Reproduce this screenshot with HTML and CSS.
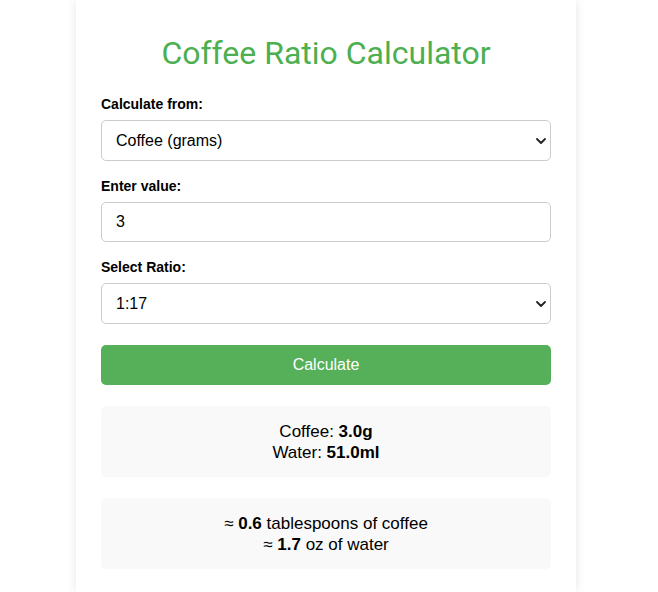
FILE: index.html
```html
<!DOCTYPE html>
<html lang="en">
<head>
  <meta charset="UTF-8" />
  <title>Coffee Ratio Calculator</title>
  <meta name="viewport" content="width=device-width, initial-scale=1.0" />
  <link rel="stylesheet" href="styles.css">
</head>
<body>
  <div class="container">
    <h1>Coffee Ratio Calculator</h1>

    <div class="form-group">
      <label for="mode">Calculate from:</label>
      <div class="select-wrap">
        <select id="mode">
          <option value="coffee" selected>Coffee (grams)</option>
          <option value="water">Water (ml)</option>
        </select>
        <svg class="chevron" viewBox="0 0 10 6" width="10" height="6"><path d="M1 1l4 4 4-4" fill="none" stroke="#222" stroke-width="1.8" stroke-linecap="round" stroke-linejoin="round"/></svg>
      </div>
    </div>

    <div class="form-group">
      <label for="amount">Enter value:</label>
      <input type="text" id="amount" value="3" />
    </div>

    <div class="form-group">
      <label for="ratio">Select Ratio:</label>
      <div class="select-wrap">
        <select id="ratio">
          <option value="15">1:15</option>
          <option value="16">1:16</option>
          <option value="17" selected>1:17</option>
          <option value="18">1:18</option>
        </select>
        <svg class="chevron" viewBox="0 0 10 6" width="10" height="6"><path d="M1 1l4 4 4-4" fill="none" stroke="#222" stroke-width="1.8" stroke-linecap="round" stroke-linejoin="round"/></svg>
      </div>
    </div>

    <button class="btn" onclick="calculate()">Calculate</button>

    <div class="result" id="result">
      Coffee: <strong>3.0g</strong><br>
      Water: <strong>51.0ml</strong>
    </div>

    <div class="result" id="measures">
      &asymp; <strong>0.6</strong> tablespoons of coffee<br>
      &asymp; <strong>1.7</strong> oz of water
    </div>
  </div>

  <script>
    function calculate() {
      const mode = document.getElementById('mode').value;
      const val = parseFloat(document.getElementById('amount').value);
      const ratio = parseFloat(document.getElementById('ratio').value);
      if (isNaN(val)) return;

      let coffee, water;
      if (mode === 'coffee') {
        coffee = val;
        water = val * ratio;
      } else {
        water = val;
        coffee = val / ratio;
      }

      document.getElementById('result').innerHTML =
        'Coffee: <strong>' + coffee.toFixed(1) + 'g</strong><br>' +
        'Water: <strong>' + water.toFixed(1) + 'ml</strong>';

      // ~5g per tablespoon, 29.57ml per oz
      document.getElementById('measures').innerHTML =
        '&asymp; <strong>' + (coffee / 5).toFixed(1) + '</strong> tablespoons of coffee<br>' +
        '&asymp; <strong>' + (water / 29.57).toFixed(1) + '</strong> oz of water';
    }
  </script>
</body>
</html>
```

FILE: styles.css
```css
body {
  font-family: 'Liberation Sans', Arial, sans-serif;
  background: #ffffff;
  color: #000;
  margin: 0;
  padding: 0 6px 0 0;
}
.container {
  width: 500px;
  box-sizing: border-box;
  margin: 0 auto;
  padding: 34px 25px 22px;
  background: #fff;
  box-shadow: 0 0 10px rgba(0, 0, 0, 0.1);
  min-height: 592px;
}
h1 {
  font-family: Roboto, sans-serif;
  font-weight: 400;
  font-size: 32px;
  color: #4caf50;
  text-align: center;
  margin: 0 0 24px;
}
.form-group {
  margin-bottom: 17px;
}
label {
  display: block;
  font-size: 14px;
  font-weight: bold;
  margin-bottom: 8px;
}
input,
select {
  display: block;
  width: 100%;
  box-sizing: border-box;
  height: 41px;
  padding: 0 14px;
  font-family: inherit;
  font-size: 16px;
  color: #000;
  background: #fff;
  border: 1px solid #ccc;
  border-radius: 5px;
}
input {
  height: 40px;
}
select {
  appearance: none;
  -webkit-appearance: none;
}
.select-wrap {
  position: relative;
}
.chevron {
  position: absolute;
  right: 5px;
  top: 18px;
  pointer-events: none;
}
.btn {
  display: block;
  width: 100%;
  height: 40px;
  margin-top: 21px;
  border: none;
  border-radius: 5px;
  background: #55b059;
  color: #fff;
  font-family: inherit;
  font-size: 16px;
  cursor: pointer;
}
.result {
  margin-top: 21px;
  padding: 14.5px 10px;
  background: #f9f9f9;
  border-radius: 5px;
  text-align: center;
  font-size: 17px;
  line-height: 21px;
}
```
